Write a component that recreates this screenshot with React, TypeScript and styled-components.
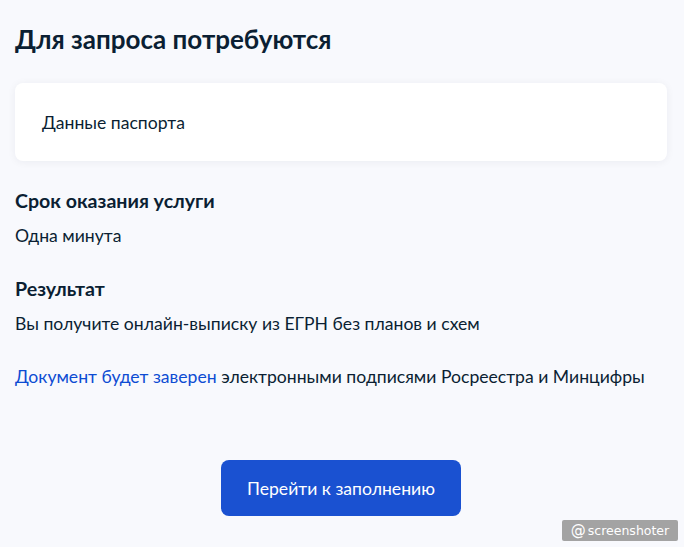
import React from "react";
import styled, { createGlobalStyle } from "styled-components";

const Global = createGlobalStyle`
  html, body { margin: 0; padding: 0; background: #f8f9fd; }
  body { font-family: Lato, "Noto Sans", sans-serif; color: #0b1f33; }
`;

const Page = styled.div`
  position: relative;
  width: 684px;
  height: 547px;
  box-sizing: border-box;
  padding: 21px 17px 0 15px;
  display: flex;
  flex-direction: column;
  background: #f8f9fd;
`;

const Title = styled.h1`
  margin: 0;
  font-size: 26px;
  line-height: 36px;
  font-weight: 700;
  color: #0b1f33;
`;

const Card = styled.div`
  margin-top: 26px;
  height: 78px;
  box-sizing: border-box;
  background: #fff;
  border-radius: 8px;
  box-shadow: 0 1px 8px rgba(11, 31, 51, 0.06);
  padding: 0 27px;
  display: flex;
  align-items: center;
  font-size: 17.6px;
`;

const Section = styled.div<{ $top: number }>`
  margin-top: ${(p) => p.$top}px;
  display: flex;
  flex-direction: column;
  gap: 12px;
`;

const Heading = styled.h2`
  margin: 0;
  font-size: 19.6px;
  line-height: 24px;
  font-weight: 700;
`;

const Text = styled.p`
  margin: 0;
  font-size: 17.6px;
  line-height: 22px;
`;

const Link = styled.a`
  color: #0d4cd3;
  text-decoration: none;
`;

const ButtonRow = styled.div`
  margin-top: 72px;
  display: flex;
  justify-content: center;
`;

const Button = styled.button`
  width: 240px;
  height: 56px;
  border: none;
  border-radius: 8px;
  background: #1a51d1;
  color: #fff;
  font-family: Lato, "Noto Sans", sans-serif;
  font-size: 17.6px;
  font-weight: 400;
  cursor: pointer;
`;

const Watermark = styled.div`
  position: absolute;
  right: 6px;
  bottom: 6px;
  width: 116px;
  height: 21px;
  background: #a3a3a3;
  border-radius: 2px;
  color: #fff;
  font-family: "DejaVu Sans", sans-serif;
  font-size: 12.5px;
  display: flex;
  align-items: center;
  justify-content: center;
  gap: 2px;
`;

const At = styled.span`
  font-size: 15px;
  line-height: 1;
`;

export default function App() {
  return (
    <>
      <Global />
      <Page>
        <Title>Для запроса потребуются</Title>
        <Card>Данные паспорта</Card>
        <Section $top={28}>
          <Heading>Срок оказания услуги</Heading>
          <Text>Одна минута</Text>
        </Section>
        <Section $top={30}>
          <Heading>Результат</Heading>
          <Text>Вы получите онлайн-выписку из ЕГРН без планов и схем</Text>
        </Section>
        <Section $top={31}>
          <Text>
            <Link href="#">Документ будет заверен</Link> электронными подписями Росреестра и Минцифры
          </Text>
        </Section>
        <ButtonRow>
          <Button>Перейти к заполнению</Button>
        </ButtonRow>
        <Watermark>
          <At>@</At>screenshoter
        </Watermark>
      </Page>
    </>
  );
}
